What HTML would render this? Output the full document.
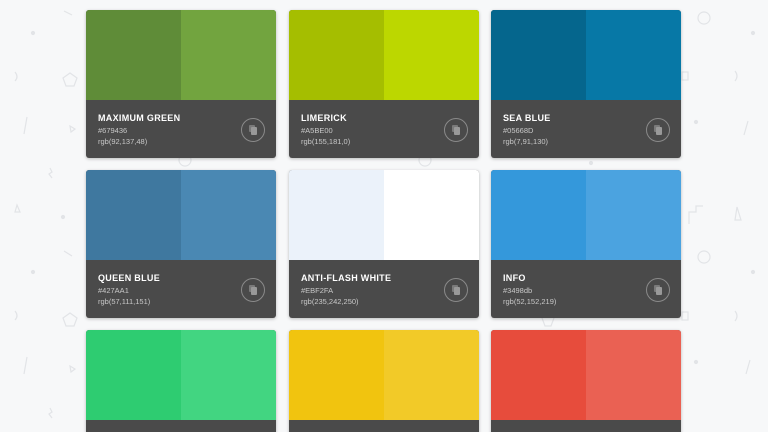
<!DOCTYPE html>
<html><head><meta charset="utf-8"><style>
*{margin:0;padding:0;box-sizing:border-box}
html,body{width:768px;height:432px;overflow:hidden}
body{background:#f7f8f9;font-family:"Liberation Sans",sans-serif;position:relative}
.card{position:absolute;width:190px;height:148px;border-radius:3px;overflow:hidden;box-shadow:0 1px 3px rgba(0,0,0,.25);background:#4a4a4a}
.sw{position:absolute;top:0;height:90px;width:50%}
.l{left:0}.r{right:0}
.t{position:absolute;left:12px;top:103px;color:#fff;font-weight:bold;font-size:9px;letter-spacing:.3px}
.h{position:absolute;left:12px;top:116px;color:#c8c8c8;font-size:7.5px}
.g{position:absolute;left:12px;top:127px;color:#c8c8c8;font-size:7.5px}
.c{position:absolute;left:155px;top:108px;width:24px;height:24px;border:1.3px solid #8a8a8a;border-radius:50%}
.c:before{content:"";position:absolute;left:7px;top:6px;width:6px;height:7px;background:#7a7a7a;border-radius:1px}
.c:after{content:"";position:absolute;left:9px;top:8px;width:6px;height:8px;background:#999;border-radius:1px}
svg{position:absolute;left:0;top:0}
</style></head><body>
<svg width="768" height="432" fill="none" stroke="#e2e4e7" stroke-width="1.2">
<path d="M64 11 L72 15"/><circle cx="33" cy="33" r="1.5" fill="#e2e4e7"/><path d="M15 72 Q19 77 15 81"/>
<polygon points="70,73 77,78 74,86 66,86 63,78"/><path d="M27 117 L24 134"/><path d="M70 126 L75 129 L71 132Z"/>
<path d="M50 168 L52 172 L49 174 L52 178"/><path d="M17 205 L20 212 L15 212Z"/><circle cx="63" cy="217" r="1.5" fill="#e2e4e7"/>
<path d="M64 251 L72 256"/><circle cx="33" cy="272" r="1.5" fill="#e2e4e7"/><path d="M15 311 Q19 316 15 320"/>
<polygon points="70,313 77,318 74,326 66,326 63,318"/><path d="M27 357 L24 374"/><path d="M70 366 L75 369 L71 372Z"/><path d="M50 408 L52 412 L49 414 L52 418"/>
<circle cx="704" cy="18" r="6"/><circle cx="753" cy="33" r="1.5" fill="#e2e4e7"/><path d="M735 71 Q739 76 735 81"/><rect x="682" y="72" width="6" height="8"/>
<circle cx="696" cy="122" r="1.5" fill="#e2e4e7"/><path d="M748 121 L744 135"/><path d="M689 224 L689 212 L696 212 L696 206 L703 206"/><path d="M737 207 L741 220 L735 220Z"/>
<circle cx="704" cy="257" r="6"/><circle cx="753" cy="272" r="1.5" fill="#e2e4e7"/><path d="M735 311 Q739 316 735 321"/><rect x="682" y="312" width="6" height="8"/>
<circle cx="696" cy="362" r="1.5" fill="#e2e4e7"/><path d="M750 360 L746 374"/>
<circle cx="185" cy="160" r="6"/><circle cx="425" cy="160" r="6"/><circle cx="591" cy="163" r="1.5" fill="#e2e4e7"/><polygon points="548,313 554,318 551,326 545,326 542,318"/>
</svg>

<div class="card" style="left:86px;top:10px"><div class="sw l" style="background:#5f8c38"></div><div class="sw r" style="background:#72a43f"></div><div class="t">MAXIMUM GREEN</div><div class="h">#679436</div><div class="g">rgb(92,137,48)</div><div class="c"></div></div>
<div class="card" style="left:289px;top:10px"><div class="sw l" style="background:#a5be00"></div><div class="sw r" style="background:#bcd700"></div><div class="t">LIMERICK</div><div class="h">#A5BE00</div><div class="g">rgb(155,181,0)</div><div class="c"></div></div>
<div class="card" style="left:491px;top:10px"><div class="sw l" style="background:#05668d"></div><div class="sw r" style="background:#0778a6"></div><div class="t">SEA BLUE</div><div class="h">#05668D</div><div class="g">rgb(7,91,130)</div><div class="c"></div></div>

<div class="card" style="left:86px;top:170px"><div class="sw l" style="background:#3f789f"></div><div class="sw r" style="background:#4a88b3"></div><div class="t">QUEEN BLUE</div><div class="h">#427AA1</div><div class="g">rgb(57,111,151)</div><div class="c"></div></div>
<div class="card" style="left:289px;top:170px"><div class="sw l" style="background:#ebf2fa"></div><div class="sw r" style="background:#ffffff"></div><div class="t">ANTI-FLASH WHITE</div><div class="h">#EBF2FA</div><div class="g">rgb(235,242,250)</div><div class="c"></div></div>
<div class="card" style="left:491px;top:170px"><div class="sw l" style="background:#3498db"></div><div class="sw r" style="background:#4ba3e0"></div><div class="t">INFO</div><div class="h">#3498db</div><div class="g">rgb(52,152,219)</div><div class="c"></div></div>

<div class="card" style="left:86px;top:330px"><div class="sw l" style="background:#2ecc71"></div><div class="sw r" style="background:#42d581"></div></div>
<div class="card" style="left:289px;top:330px"><div class="sw l" style="background:#f1c40f"></div><div class="sw r" style="background:#f2ca28"></div></div>
<div class="card" style="left:491px;top:330px"><div class="sw l" style="background:#e74c3c"></div><div class="sw r" style="background:#ea6153"></div></div>
</body></html>
